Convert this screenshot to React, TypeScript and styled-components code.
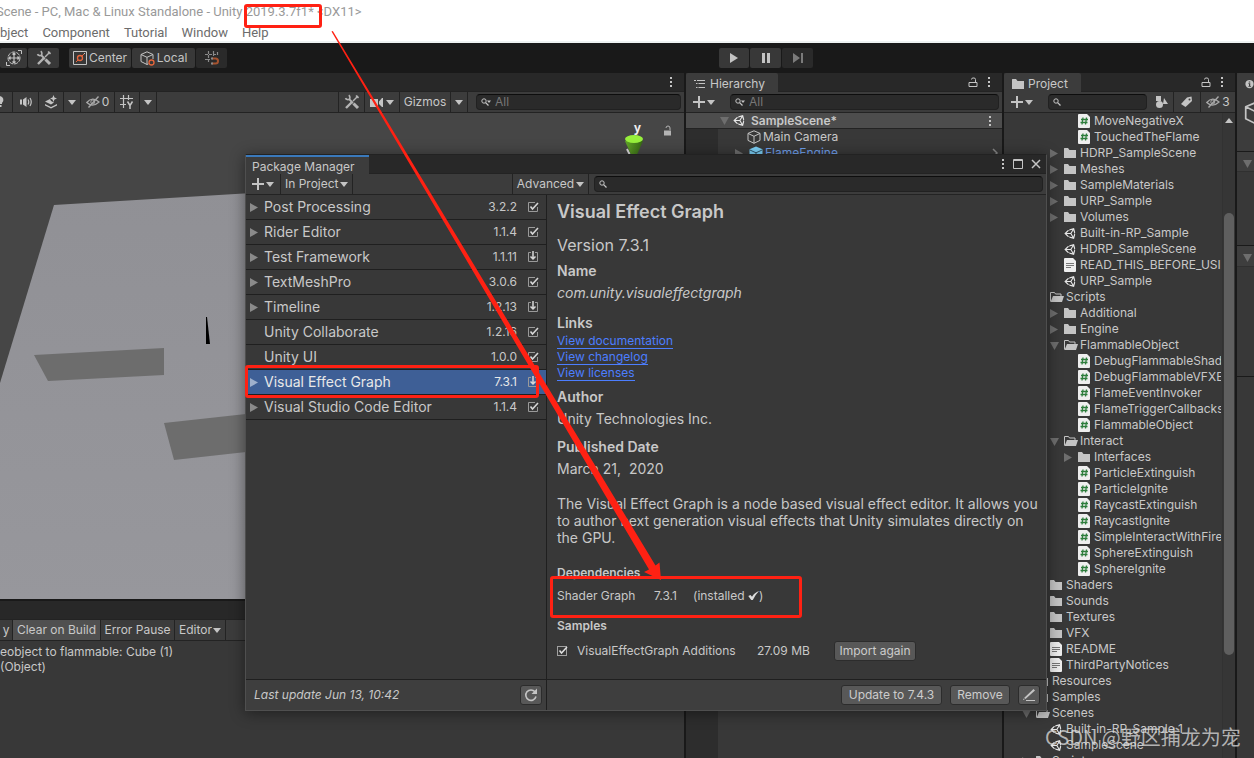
import React from "react";
import styled, { createGlobalStyle, css } from "styled-components";
import { FaUnity } from "react-icons/fa";

const c = {
  frame: "#191919",
  strip: "#282828",
  bar: "#3c3c3c",
  panel: "#383838",
  line: "#232323",
  field: "#2a2a2a",
  text: "#c8c8c8",
  icon: "#c4c4c4",
  dim: "#7b7b7b",
  red: "#ff2113",
};

const GlobalStyle = createGlobalStyle`
  * { box-sizing: border-box; }
  body { margin: 0; background: ${c.frame}; }
  button, input, select { font: inherit; color: inherit; }
  ul { list-style: none; margin: 0; padding: 0; }
`;

const Page = styled.div`
  position: relative;
  display: flex;
  flex-direction: column;
  height: 100vh;
  overflow: hidden;
  color: ${c.text};
  font: 12px/16px Inter, "Liberation Sans", sans-serif;
  white-space: nowrap;
`;

/* ---------- window chrome ---------- */

const WindowHead = styled.header`
  background: #fff;
  border-bottom: 2px solid #eef2f2;
  font-family: Roboto, "Noto Sans", sans-serif;
  font-size: 13px;
`;
const WindowTitle = styled.div`
  height: 24px;
  margin-left: -4px;
  line-height: 24px;
  color: #999;
`;
const MenuBar = styled.nav`
  display: flex;
  gap: 14px;
  height: 17px;
`;
const MenuItem = styled.button`
  padding: 0;
  border: 0;
  background: none;
  line-height: 17px;
  color: #6c6c6c;
`;

const MainToolbar = styled.div`
  display: flex;
  align-items: center;
  flex: none;
  height: 30px;
  background: ${c.frame};
`;
const ToolGroup = styled.div`
  display: flex;
  gap: 1px;
  margin-right: 10px;
`;
const ToolButton = styled.button<{ $w: number; $off?: boolean }>`
  display: flex;
  align-items: center;
  justify-content: center;
  gap: 2px;
  width: ${(p) => p.$w}px;
  height: 20px;
  padding: 0;
  border: 0;
  border-radius: 2px;
  background: ${(p) => (p.$off ? "#2a2a2a" : "#383838")};
  color: ${(p) => (p.$off ? c.dim : c.icon)};
`;
const PlaySpacer = styled.div`
  flex: 0 1 482px;
`;

/* ---------- docks ---------- */

const Docks = styled.main`
  display: flex;
  gap: 2px;
  flex: 1;
  min-height: 0;
  background: ${c.frame};
`;
const Dock = styled.section<{ $w?: number }>`
  display: flex;
  flex-direction: column;
  ${(p) => (p.$w ? css`flex: none; width: ${p.$w}px;` : css`flex: 1;`)}
  min-width: 0;
  min-height: 0;
  background: ${c.panel};
`;
const LeftColumn = styled.div`
  display: flex;
  flex-direction: column;
  gap: 2px;
  flex: 1;
  min-width: 0;
`;
const ConsoleDock = styled(Dock)`
  flex: none;
  height: 157px;
`;
const TabStrip = styled.div`
  display: flex;
  align-items: center;
  justify-content: flex-end;
  gap: 10px;
  flex: none;
  height: 19px;
  padding-right: 11px;
  border-bottom: 1px solid ${c.line};
  background: ${c.strip};
`;
const Tab = styled.div<{ $w: number }>`
  display: flex;
  align-items: center;
  gap: 4px;
  width: ${(p) => p.$w}px;
  height: 19px;
  margin: 0 auto -1px 0;
  padding: 2px 0 0 8px;
  border-radius: 2px 2px 0 0;
  background: ${c.bar};
`;
const Bar = styled.div`
  display: flex;
  align-items: center;
  flex: none;
  height: 21px;
  border-bottom: 1px solid ${c.line};
  background: ${c.bar};
`;
const BarButton = styled.button<{ $w: number; $on?: boolean; $open?: boolean }>`
  display: flex;
  align-items: center;
  justify-content: center;
  gap: 2px;
  flex: none;
  width: ${(p) => p.$w}px;
  height: 20px;
  padding: 0;
  border: 0;
  ${(p) => !p.$open && css`border-right: 1px solid ${c.line};`}
  background: ${(p) => (p.$on ? "#505050" : "transparent")};
  overflow: hidden;
`;
const Fill = styled.div`
  flex: 1;
  align-self: stretch;
  border-right: 1px solid ${c.line};
`;
const SearchField = styled.label<{ $w?: number; $lead?: number }>`
  display: flex;
  align-items: center;
  gap: 4px;
  ${(p) => (p.$w ? css`flex: none; width: ${p.$w}px;` : css`flex: 1;`)}
  min-width: 0;
  height: 16px;
  margin: 0 3px 0 ${(p) => p.$lead ?? 8}px;
  padding-left: 4px;
  border: 1px solid #212121;
  border-top-color: #0d0d0d;
  border-radius: 4px;
  background: ${c.field};
`;
const SearchInput = styled.input`
  flex: 1;
  min-width: 0;
  height: 14px;
  padding: 0;
  border: 0;
  outline: 0;
  background: none;
  line-height: 14px;
  &::placeholder { color: #777; opacity: 1; }
`;
const IconButton = styled.button`
  display: flex;
  align-items: center;
  padding: 0;
  border: 0;
  background: none;
`;

/* ---------- scene and console ---------- */

const SceneView = styled.div`
  flex: 1;
  min-height: 0;
  overflow: hidden;
  background: #464646;
  svg { display: block; }
`;
const ConsoleLog = styled.div`
  padding-top: 3px;
  line-height: 15px;
`;

/* ---------- trees ---------- */

const HierarchyBody = styled.ul`
  flex: 1;
  min-height: 0;
  background: linear-gradient(90deg, #2d2d2d 32px, ${c.panel} 32px);
`;
const TreeRow = styled.li<{ $pad: number; $head?: boolean; $prefab?: boolean }>`
  display: flex;
  align-items: center;
  gap: 2px;
  height: 16px;
  padding-left: ${(p) => p.$pad}px;
  color: ${(p) => (p.$prefab ? "#6f9fea" : c.text)};
  svg { flex: none; }
  ${(p) => p.$head && css`
    gap: 4px;
    padding-right: 10px;
    border-bottom: 1px solid ${c.line};
    background: #4d4d4d;
    font-weight: 600;
    > :last-child { margin-left: auto; }
  `}
  ${(p) => p.$prefab && css`
    padding-right: 3px;
    > :last-child { margin-left: auto; }
  `}
`;
const Twisty = styled.span`
  display: flex;
  flex: none;
  width: 12px;
`;
const SceneSlot = styled.span`
  display: flex;
  flex: none;
  width: 14px;
`;
const ProjectBody = styled.div`
  display: flex;
  flex: 1;
  min-height: 0;
`;
const ProjectTree = styled.ul`
  flex: 1;
  min-width: 0;
  overflow: hidden;
`;
const ScrollTrack = styled.div`
  display: flex;
  flex-direction: column;
  align-items: center;
  flex: none;
  width: 13px;
  margin-left: 1px;
  padding-top: 5px;
  border-left: 1px solid #323232;
  background: #363636;
`;
const ScrollThumb = styled.div`
  width: 10px;
  height: 442px;
  margin-top: 90px;
  border-radius: 5px;
  background: #5f5f5f;
`;
const InspectorBlock = styled.div<{ $h: number; $head?: boolean }>`
  flex: none;
  height: ${(p) => p.$h}px;
  padding: ${(p) => (p.$head ? "7px 0 0 6px" : 0)};
  border-bottom: 1px solid ${(p) => (p.$head ? "#303030" : "#1a1a1a")};
  background: ${(p) => (p.$head ? "#3e3e3e" : c.panel)};
  overflow: hidden;
  svg { display: block; }
`;
const InspectorTop = styled.div`
  flex: none;
  height: 61px;
  padding: 10px 0 0 7px;
  border-bottom: 1px solid #1a1a1a;
  background: ${c.bar};
  overflow: hidden;
`;

/* ---------- package manager window ---------- */

const PackageWindow = styled.section`
  position: absolute;
  left: 245px;
  top: 154px;
  display: flex;
  flex-direction: column;
  width: 802px;
  height: 557px;
  border: 1px solid #4f4f4f;
  border-top-color: #222;
  background: ${c.panel};
  box-shadow: 0 2px 14px rgba(0, 0, 0, 0.45);
`;
const WindowStrip = styled(TabStrip)`
  gap: 8px;
  padding-right: 5px;
`;
const WindowTab = styled.div`
  width: 123px;
  height: 19px;
  margin: 0 auto -1px 0;
  padding-left: 6px;
  border-top: 2px solid #3a79bb;
  background: ${c.bar};
  line-height: 20px;
`;
const SelectWrap = styled.label<{ $w: number }>`
  display: flex;
  align-items: center;
  justify-content: center;
  gap: 1px;
  flex: none;
  width: ${(p) => p.$w}px;
  height: 20px;
  border-right: 1px solid ${c.line};
`;
const Select = styled.select`
  appearance: none;
  padding: 0;
  border: 0;
  outline: 0;
  background: transparent;
`;
const WindowBody = styled.div`
  display: flex;
  flex: 1;
  min-height: 0;
`;
const ListPane = styled.div`
  display: flex;
  flex-direction: column;
  flex: none;
  width: 301px;
  border-right: 1px solid #1f1f1f;
`;
const PackageList = styled.ul`
  flex: 1;
`;
const PackageRow = styled.button<{ $on?: boolean }>`
  display: flex;
  align-items: center;
  width: 100%;
  height: 25px;
  padding: 0 7px 0 4px;
  border: 0;
  border-bottom: 1px solid #1f1f1f;
  background: ${(p) => (p.$on ? "#3e5f96" : "transparent")};
  color: ${(p) => (p.$on ? "#e8e8e8" : c.text)};
  text-align: left;
`;
const PackageArrow = styled.span`
  display: flex;
  width: 14px;
`;
const PackageName = styled.span`
  flex: 1;
  font-size: 14px;
`;
const PackageVersion = styled.span`
  padding-right: 10px;
`;
const Footer = styled.div<{ $end: number }>`
  display: flex;
  align-items: center;
  justify-content: flex-end;
  gap: 8px;
  flex: none;
  height: 31px;
  padding: 0 ${(p) => p.$end}px 0 8px;
  border-top: 1px solid #1f1f1f;
  background: #3e3e3e;
`;
const UpdateNote = styled.em`
  margin-right: auto;
`;
const PushButton = styled.button<{ $w: number }>`
  display: flex;
  align-items: center;
  justify-content: center;
  flex: none;
  width: ${(p) => p.$w}px;
  height: 20px;
  padding: 0;
  border: 1px solid #2c2c2c;
  border-radius: 3px;
  background: #585858;
  color: #ccc;
  svg { flex: none; }
`;
const DetailPane = styled.div`
  display: flex;
  flex-direction: column;
  flex: 1;
  min-width: 0;
`;
const Details = styled.div`
  flex: 1;
  min-height: 0;
  padding: 5px 5px 0 10px;
  font-size: 14px;
  line-height: 18px;
`;
const PackageTitle = styled.h1`
  margin: 0 0 11px;
  font-size: 18px;
  line-height: 24px;
  font-weight: 600;
`;
const VersionLine = styled.div`
  margin-bottom: 7px;
  font-size: 16px;
  line-height: 20px;
`;
const Field = styled.div<{ $tight?: boolean; $after: number }>`
  display: flex;
  flex-direction: column;
  align-items: flex-start;
  gap: ${(p) => (p.$tight ? 1 : 4)}px;
  margin-bottom: ${(p) => p.$after}px;
`;
const FieldName = styled.h2`
  margin: 0;
  font-size: 14px;
  line-height: 18px;
  font-weight: 600;
`;
const LinkList = styled.ul`
  font-size: 12px;
  line-height: 16px;
`;
const DocLink = styled.a`
  display: block;
  width: fit-content;
  height: 16px;
  line-height: 15px;
  border-bottom: 1px solid #4c7eff;
  color: #4c7eff;
  text-decoration: none;
`;
const Description = styled.p`
  margin: 0 0 19px;
  line-height: 17px;
  white-space: normal;
`;
const SmallHeading = styled.h3`
  margin: 0;
  font-size: 12px;
  line-height: 16px;
  font-weight: 600;
`;
const SmallRow = styled.div<{ $after: number }>`
  display: flex;
  align-items: center;
  margin: 7px 0 ${(p) => p.$after}px;
  font-size: 12px;
  line-height: 16px;
`;
const Cell = styled.span<{ $w: number }>`
  width: ${(p) => p.$w}px;
`;
const CheckLabel = styled.label`
  display: flex;
  align-items: center;
  gap: 10px;
  width: 200px;
`;
const CheckInput = styled.input`
  appearance: none;
  width: 10px;
  height: 10px;
  margin: 0;
  border: 1px solid #a0a0a0;
`;
const CheckBox = styled.span`
  display: grid;
  width: 10px;
  > * { grid-area: 1 / 1; }
  svg { overflow: visible; pointer-events: none; }
`;

/* ---------- annotations ---------- */

const Mark = styled.div<{ $x: number; $y: number; $w: number; $h: number }>`
  position: absolute;
  left: ${(p) => p.$x}px;
  top: ${(p) => p.$y}px;
  width: ${(p) => p.$w}px;
  height: ${(p) => p.$h}px;
  border: 3px solid ${c.red};
  border-radius: 3px;
  pointer-events: none;
`;
const ArrowLayer = styled.svg`
  position: absolute;
  left: 330px;
  top: 30px;
  pointer-events: none;
`;
const Watermark = styled.div`
  position: absolute;
  left: 1045px;
  top: 723px;
  font: 20px/28px "Noto Sans CJK SC", sans-serif;
  color: rgba(220, 220, 220, 0.75);
  pointer-events: none;
`;

/* ---------- icons ---------- */

const Down = () => (
  <svg width="8" height="5" viewBox="0 0 8 5"><path d="M0 0h8L4 5z" fill={c.icon} /></svg>
);
const Arrow = ({ open, color = "#6e6e6e" }: { open?: boolean; color?: string }) => (
  <svg width="9" height="9" viewBox="0 0 9 9"><path d={open ? "M0 1h9L4.500 9z" : "M0 0v9L8 4.500z"} fill={color} /></svg>
);
const Dots = () => (
  <svg width="3" height="12" viewBox="0 0 3 12" fill={c.icon}><path d="M0 1h2v2H0zM0 5h2v2H0zM0 9h2v2H0z" /></svg>
);
const Plus = () => (
  <svg width="12" height="12" viewBox="0 0 12 12"><path d="M6 0v12M0 6h12" stroke={c.icon} strokeWidth="2" /></svg>
);
const Lock = () => (
  <svg width="10" height="11" viewBox="0 0 10 11" fill="none" stroke={c.icon}>
    <path d="M1 5.500h8v4H1zM7.500 5V2.500Q7.500 1 6 1H5Q3.500 1 3.500 2.500" />
  </svg>
);
const Lens = ({ menu }: { menu?: boolean }) => (
  <svg width="10" height="8" viewBox="0 0 10 8" fill="none" stroke={c.icon}>
    <circle cx="3" cy="3" r="2.200" /><path d="M4.600 4.600L7.500 7.500" strokeWidth="1.300" />
    {menu && <path d="M6 2.500h4L8 5z" fill={c.icon} stroke="none" />}
  </svg>
);
const Cube = ({ size = 14, fill = "none", color = c.icon }: { size?: number; fill?: string; color?: string }) => (
  <svg width={size} height={size} viewBox="0 0 14 14" fill={fill} stroke={color} strokeLinejoin="round">
    <path d="M7 .8l6 2.600v7L7 13.300l-6-2.900v-7zM1 3.400l6 2.900 6-2.900M7 6.300v7" />
  </svg>
);
const PrefabCube = () => (
  <svg width="14" height="14" viewBox="0 0 14 14">
    <path d="M7 .5l6.500 2.800v7.400L7 13.700.5 10.700V3.300z" fill="#7cd0f7" />
    <path d="M.5 3.800L7 6.800l6.500-3M7 6.800v7" fill="none" stroke="#30566b" />
  </svg>
);
const Tools = () => (
  <svg width="16" height="16" viewBox="0 0 16 16" fill="none" stroke="#b4b4b4">
    <path d="M2 14l6-6" strokeWidth="2.400" />
    <path d="M9 7l5-5" strokeWidth="1.400" />
    <path d="M5 5l4 4" strokeWidth="1.800" />
    <path d="M9.500 9.500l4.500 4.500" strokeWidth="3" />
    <path d="M1.500 4.200a2.400 2.400 0 0 0 3.800 .8 2.400 2.400 0 0 0-.6-3.700" strokeWidth="1.600" />
    <path d="M12 1.500l2.500 2.500" strokeWidth="1.600" />
  </svg>
);
const Transform = () => (
  <svg width="18" height="18" viewBox="0 0 18 18" fill="none" stroke={c.icon}>
    <circle cx="9" cy="9" r="6" strokeDasharray="4 1" />
    <path d="M9 4v10M4 9h10M7.500 5.500L9 4l1.500 1.500M7.500 12.500L9 14l1.500-1.500M5.500 7.500L4 9l1.500 1.500M12.500 7.500L14 9l-1.500 1.500" strokeWidth="1.200" />
    <path d="M13 1.500h3.500V5M5 16.500H1.500V13" />
  </svg>
);
const Pivot = () => (
  <svg width="14" height="14" viewBox="0 0 14 14" fill="none">
    <path d="M.5 .5h13v13H.5zM3 11l2-2M9 5l3-3" stroke={c.icon} />
    <circle cx="7" cy="7" r="2.500" stroke="#e8663c" strokeWidth="1.300" />
    <path d="M9 5l2-2M3 11l2-2" stroke="#e8663c" />
  </svg>
);
const LocalCube = () => (
  <svg width="15" height="15" viewBox="0 0 15 15" fill="none" stroke={c.icon} strokeLinejoin="round">
    <path d="M8.500 12.800L7 13.500l-6-3V3.500l6-2.700 6 2.700V8M1 3.500l6 2.800 6-2.800M7 6.300v7.200" />
    <circle cx="11.500" cy="11.500" r="2.500" stroke="#e8663c" strokeWidth="1.300" />
  </svg>
);
const GridSnap = () => (
  <svg width="16" height="16" viewBox="0 0 16 16" fill="none" stroke="#8b8b8b">
    <path d="M4.500 1v12M9.500 1v5M1 4.500h13M1 9.500h5M13.500 2v4" strokeWidth="1.200" strokeDasharray="3 1" />
    <path d="M8 8.500h3.500a2.500 2.500 0 0 1 0 5H8" stroke="#a6532f" strokeWidth="2" />
    <path d="M7 8.500h2M7 13.500h2" strokeWidth="2" />
  </svg>
);
const GridY = () => (
  <svg width="16" height="16" viewBox="0 0 16 16" fill="none" stroke={c.icon}>
    <path d="M4.500 1v13M9.500 1v5M1 4.500h13M1 10.500h6" strokeWidth="1.200" />
    <path d="M8.500 7.500l2.500 4 2.500-4M11 11v4" strokeWidth="1.500" />
  </svg>
);
const Play = () => <svg width="10" height="10" viewBox="0 0 10 10"><path d="M1 0v10l8-5z" fill={c.icon} /></svg>;
const Pause = () => <svg width="10" height="10" viewBox="0 0 10 10"><path d="M1 0h3v10H1zM6 0h3v10H6z" fill={c.icon} /></svg>;
const Step = () => <svg width="12" height="10" viewBox="0 0 12 10"><path d="M1 0v10l7-5zM9 0h2v10H9z" fill={c.dim} /></svg>;
const Speaker = () => (
  <svg width="14" height="12" viewBox="0 0 14 12" fill="none" stroke={c.icon}>
    <path d="M1 3.500h2v5H1zM4 3.500l3.500-2.500v10L4 8.500z" fill={c.icon} stroke="none" />
    <path d="M9 3.500q1.500 2.500 0 5M11 2q2.500 4 0 8" strokeWidth="1.200" />
  </svg>
);
const Effects = () => (
  <svg width="14" height="14" viewBox="0 0 14 14" fill={c.icon}>
    <path d="M1 6.500L6 4l1 2 3 1.500L7 9.500zM1 9l6 3 6-3v1.500L7 13.500 1 10.500z" />
    <path d="M9.500 0l1 2.500L13 3.500l-2.500 1-1 2.500-1-2.500-2.500-1 2.500-1z" />
  </svg>
);
const Bulb = () => <svg width="12" height="12" viewBox="0 0 12 12"><path d="M0 0a4 4 0 0 1 2 7v1H0zM0 9h1.500v2H0z" fill={c.icon} /></svg>;
const EyeOff = () => (
  <svg width="14" height="12" viewBox="0 0 14 12" fill="none" stroke="#a8a8a8">
    <path d="M.8 6.500Q6.500 0 13 6Q6.500 12 .8 6.500z" strokeWidth="1.300" /><circle cx="6.800" cy="6" r="2" /><path d="M2.500 11.500L12.500 .5" strokeWidth="1.400" />
  </svg>
);
const CameraIcon = () => (
  <svg width="14" height="9" viewBox="0 0 14 9" fill={c.icon}><path d="M0 1h8v8H0zM9 3.500L12 0v9L9 6z" /><path d="M12 0h1v9h-1z" /></svg>
);
const ListIcon = () => (
  <svg width="12" height="10" viewBox="0 0 12 10" stroke={c.icon}>
    <path d="M0 1.500h2M3 1.500h8M2 4.500h1.500M4.500 4.500H11M2 8.500h1.500M4.500 8.500H11" />
  </svg>
);
const Folder = ({ open }: { open?: boolean }) =>
  open ? (
    <svg width="14" height="12" viewBox="0 0 14 12">
      <path d="M.5 10.500V1.500h4l1 1.500h5.500v2" fill="none" stroke={c.icon} /><path d="M3 5h11l-2 6H.5z" fill={c.icon} />
    </svg>
  ) : (
    <svg width="14" height="12" viewBox="0 0 14 12"><path d="M0 1.500Q0 1 .5 1H4l1.500 2H12v8H0z" fill={c.icon} /></svg>
  );
const TabFolder = () => (
  <svg width="12" height="12" viewBox="0 0 12 12"><path d="M0 1.500Q0 1 .5 1H4l1.500 2H12v8H0z" fill={c.icon} /></svg>
);
const Script = () => (
  <svg width="14" height="14" viewBox="0 0 14 14">
    <path d="M0 1Q0 0 1 0h8l3 3v10q0 1-1 1H1q-1 0-1-1z" fill="#eee" />
    <path d="M5 3.500L4 10.500M8.500 3.500l-1 7M3 5.500h7M2.500 8.500h7" stroke="#2d7d3c" strokeWidth="1.300" />
  </svg>
);
const Doc = () => (
  <svg width="14" height="14" viewBox="0 0 14 14">
    <path d="M0 1Q0 0 1 0h8l3 3v10q0 1-1 1H1q-1 0-1-1z" fill="#eee" />
    <path d="M2 5.500h8M2 7.500h8M2 9.500h5" stroke="#777" />
  </svg>
);
const Scene = () => <SceneSlot><FaUnity size={13} color="#e6e6e6" /></SceneSlot>;
const Checked = () => (
  <svg width="12" height="12" viewBox="0 0 12 12" fill="none">
    <path d="M10.500 6v4.500H1.500V1.500H8" stroke="#9a9a9a" /><path d="M3.500 5.500l2 2.500L11 2" stroke="#d6d6d6" strokeWidth="1.600" />
  </svg>
);
const Download = () => (
  <svg width="12" height="12" viewBox="0 0 12 12" fill="none">
    <path d="M4 1.500H1.500v9h9v-9H8" stroke="#9a9a9a" /><path d="M6 0v7M3.500 5.500L6 8l2.500-2.500" stroke="#d6d6d6" strokeWidth="1.500" />
  </svg>
);
const Tick = () => (
  <svg width="10" height="10" viewBox="0 0 10 10"><path d="M2.500 4.500l2 2.500L10 1" fill="none" stroke="#e0e0e0" strokeWidth="1.500" /></svg>
);
const Heavy = () => (
  <svg width="11" height="9" viewBox="0 0 11 9"><path d="M.3 5L2.500 4l1.500 1.800Q6.500 1.500 11 0 7.500 3.500 4.800 9H3.200z" fill="#dcdcdc" /></svg>
);
const Refresh = () => (
  <svg width="14" height="14" viewBox="0 0 14 14" fill="none" stroke={c.icon} strokeWidth="1.600">
    <path d="M11 3.800a5.200 5.200 0 1 0 1 4.800" /><path d="M13 .5v5.500H7.500z" fill={c.icon} stroke="none" />
  </svg>
);
const Pencil = () => (
  <svg width="12" height="12" viewBox="0 0 12 12"><path d="M1 9l1.500 1L12 1.500 10.500 0zM.5 9.500L0 11l1.700-.5z" fill={c.icon} /><path d="M3 11.500h9" stroke={c.icon} /></svg>
);
const Shapes = () => (
  <svg width="13" height="12" viewBox="0 0 13 12" fill={c.icon}><path d="M1 0h5v5H1zM9 2l4 6H8z" /><circle cx="4.500" cy="8.500" r="3.500" /></svg>
);
const Tag = () => (
  <svg width="12" height="12" viewBox="0 0 12 12"><path d="M0 8L6 1.500 10.500 .5 11 5 4.500 11z" fill={c.icon} /><circle cx="8.500" cy="3.500" r="1" fill={c.bar} /></svg>
);
const Info = () => (
  <svg width="12" height="12" viewBox="0 0 12 12"><circle cx="6" cy="6" r="5.500" fill={c.icon} /><path d="M5 2.500h2v1.500H5zM4.500 5H7v3.500h1v1H4.500v-1h.8V6h-.8z" fill={c.bar} /></svg>
);

/* ---------- data ---------- */

type Kind = "script" | "doc" | "scene" | "folder" | "open";
const kinds: Record<Kind, React.ReactNode> = {
  script: <Script />,
  doc: <Doc />,
  scene: <Scene />,
  folder: <Folder />,
  open: <Folder open />,
};
const tree: [number, Kind, string, ("right" | "down")?][] = [
  [3, "script", "MoveNegativeX"],
  [3, "script", "TouchedTheFlame"],
  [2, "folder", "HDRP_SampleScene", "right"],
  [2, "folder", "Meshes", "right"],
  [2, "folder", "SampleMaterials", "right"],
  [2, "folder", "URP_Sample", "right"],
  [2, "folder", "Volumes", "right"],
  [2, "scene", "Built-in-RP_Sample"],
  [2, "scene", "HDRP_SampleScene"],
  [2, "doc", "READ_THIS_BEFORE_USING"],
  [2, "scene", "URP_Sample"],
  [1, "open", "Scripts", "down"],
  [2, "folder", "Additional", "right"],
  [2, "folder", "Engine", "right"],
  [2, "open", "FlammableObject", "down"],
  [3, "script", "DebugFlammableShader"],
  [3, "script", "DebugFlammableVFXBox"],
  [3, "script", "FlameEventInvoker"],
  [3, "script", "FlameTriggerCallbacks"],
  [3, "script", "FlammableObject"],
  [2, "open", "Interact", "down"],
  [3, "folder", "Interfaces", "right"],
  [3, "script", "ParticleExtinguish"],
  [3, "script", "ParticleIgnite"],
  [3, "script", "RaycastExtinguish"],
  [3, "script", "RaycastIgnite"],
  [3, "script", "SimpleInteractWithFire"],
  [3, "script", "SphereExtinguish"],
  [3, "script", "SphereIgnite"],
  [1, "folder", "Shaders", "right"],
  [1, "folder", "Sounds", "right"],
  [1, "folder", "Textures", "right"],
  [1, "folder", "VFX", "right"],
  [1, "doc", "README"],
  [1, "doc", "ThirdPartyNotices"],
  [0, "folder", "Resources", "right"],
  [0, "folder", "Samples", "right"],
  [0, "open", "Scenes", "down"],
  [1, "scene", "Built-in-RP_Sample 1"],
  [1, "scene", "SampleScene"],
  [0, "folder", "Scripts", "right"],
];

const packages = [
  { name: "Post Processing", version: "3.2.2", many: true },
  { name: "Rider Editor", version: "1.1.4", many: true },
  { name: "Test Framework", version: "1.1.11", many: true, update: true },
  { name: "TextMeshPro", version: "3.0.6", many: true },
  { name: "Timeline", version: "1.2.13", many: true, update: true },
  { name: "Unity Collaborate", version: "1.2.16" },
  { name: "Unity UI", version: "1.0.0" },
  { name: "Visual Effect Graph", version: "7.3.1", many: true, update: true, on: true },
  { name: "Visual Studio Code Editor", version: "1.1.4", many: true },
];

type SearchProps = { label: string; hint?: string; menu?: boolean; width?: number; lead?: number };
const Search = ({ label, hint, menu, width, lead }: SearchProps) => (
  <SearchField $w={width} $lead={lead}>
    <Lens menu={menu} />
    <SearchInput type="text" aria-label={label} placeholder={hint} />
  </SearchField>
);

/* ---------- parts ---------- */

const TopBar = () => (
  <MainToolbar>
    <ToolGroup>
      <ToolButton $w={27} aria-label="Transform"><Transform /></ToolButton>
      <ToolButton $w={31} aria-label="Custom tools"><Tools /></ToolButton>
    </ToolGroup>
    <ToolGroup>
      <ToolButton $w={62}><Pivot />Center</ToolButton>
      <ToolButton $w={63}><LocalCube />Local</ToolButton>
      <ToolButton $w={31} $off aria-label="Grid snapping"><GridSnap /></ToolButton>
    </ToolGroup>
    <PlaySpacer />
    <ToolGroup>
      <ToolButton $w={30} aria-label="Play"><Play /></ToolButton>
      <ToolButton $w={31} aria-label="Pause"><Pause /></ToolButton>
      <ToolButton $w={31} $off aria-label="Step"><Step /></ToolButton>
    </ToolGroup>
  </MainToolbar>
);

const SceneDock = () => (
  <Dock>
    <TabStrip>
      <IconButton aria-label="Scene menu"><Dots /></IconButton>
    </TabStrip>
    <Bar>
      <BarButton $w={13} aria-label="Lighting"><Bulb /></BarButton>
      <BarButton $w={26} aria-label="Audio"><Speaker /></BarButton>
      <BarButton $w={25} aria-label="Effects"><Effects /></BarButton>
      <BarButton $w={17} aria-label="Effects menu"><Down /></BarButton>
      <BarButton $w={34} aria-label="Hidden objects"><EyeOff />0</BarButton>
      <BarButton $w={25} aria-label="Grid"><GridY /></BarButton>
      <BarButton $w={17} aria-label="Grid menu"><Down /></BarButton>
      <Fill />
      <BarButton $w={26} aria-label="Component tools"><Tools /></BarButton>
      <BarButton $w={35} aria-label="Camera"><CameraIcon /><Down /></BarButton>
      <BarButton $w={51}>Gizmos</BarButton>
      <BarButton $w={17} aria-label="Gizmos menu"><Down /></BarButton>
      <Search label="Search scene" hint="All" menu width={205} />
    </Bar>
    <SceneView>
      <svg width="684" height="486" viewBox="0 0 684 486">
        <defs>
          <linearGradient id="floor" x1="0" y1="0" x2="0" y2="1">
            <stop offset="0" stopColor="#909095" /><stop offset="1" stopColor="#97979c" />
          </linearGradient>
          <linearGradient id="cone"><stop offset="0" stopColor="#63a928" /><stop offset="1" stopColor="#356514" /></linearGradient>
        </defs>
        <path d="M54 92L684 54V486H0V270z" fill="url(#floor)" />
        <path d="M34 242l130-7v27l-116 6z" fill="#6d6d6d" />
        <path d="M164 310l82-9v38l-72 8z" fill="#6d6d6d" />
        <path d="M206 204l1 0 3 27h-4z" fill="#000" />
        <path d="M627 36l5 10" stroke="#ddd" strokeWidth="2" />
        <path d="M625 28h18l-8 18h-2z" fill="url(#cone)" />
        <ellipse cx="634" cy="26" rx="9" ry="4" fill="#97f03c" />
        <text x="634" y="19" fill="#eee" fontSize="12" fontWeight="700" fontFamily="Noto Sans">y</text>
        <path d="M664 17.500h7v5h-7z" fill="#b4b4b4" /><path d="M670 17v-2q0-2-2-2t-2 2" fill="none" stroke="#b4b4b4" />
      </svg>
    </SceneView>
  </Dock>
);

const ConsolePanel = () => (
  <ConsoleDock>
    <TabStrip />
    <Bar>
      <BarButton $w={13}>y</BarButton>
      <BarButton $w={88} $on>Clear on Build</BarButton>
      <BarButton $w={74}>Error Pause</BarButton>
      <SelectWrap $w={51}>
        <Select aria-label="Log target"><option>Editor</option></Select>
        <Down />
      </SelectWrap>
    </Bar>
    <ConsoleLog>
      <div>eobject to flammable: Cube (1)</div>
      <div>(Object)</div>
    </ConsoleLog>
  </ConsoleDock>
);

const HierarchyDock = () => (
  <Dock $w={316}>
    <TabStrip>
      <Tab $w={92}><ListIcon />Hierarchy</Tab>
      <IconButton aria-label="Lock hierarchy"><Lock /></IconButton>
      <IconButton aria-label="Hierarchy menu"><Dots /></IconButton>
    </TabStrip>
    <Bar>
      <BarButton $w={36} $open aria-label="Create"><Plus /><Down /></BarButton>
      <Search label="Search hierarchy" hint="All" menu />
    </Bar>
    <HierarchyBody>
      <TreeRow $pad={34} $head>
        <Arrow open />
        <Scene />
        <span>SampleScene*</span>
        <Dots />
      </TreeRow>
      <TreeRow $pad={61}><Cube />Main Camera</TreeRow>
      <TreeRow $pad={49} $prefab>
        <Twisty><Arrow /></Twisty>
        <PrefabCube />
        FlameEngine
        <svg width="8" height="10" viewBox="0 0 8 10"><path d="M2 1l4 4-4 4" fill="none" stroke="#888" strokeWidth="1.500" /></svg>
      </TreeRow>
    </HierarchyBody>
  </Dock>
);

const ProjectDock = () => (
  <Dock $w={231}>
    <TabStrip>
      <Tab $w={77}><TabFolder />Project</Tab>
      <IconButton aria-label="Lock project"><Lock /></IconButton>
      <IconButton aria-label="Project menu"><Dots /></IconButton>
    </TabStrip>
    <Bar>
      <BarButton $w={36} $open aria-label="Create asset"><Plus /><Down /></BarButton>
      <Search label="Search project" />
      <BarButton $w={24} aria-label="Filter by type"><Shapes /></BarButton>
      <BarButton $w={27} aria-label="Filter by label"><Tag /></BarButton>
      <BarButton $w={34} $open aria-label="Hidden packages"><EyeOff />3</BarButton>
    </Bar>
    <ProjectBody>
      <ProjectTree>
        {tree.map(([depth, kind, name, dir], i) => (
          <TreeRow key={i} $pad={18 + depth * 14}>
            <Twisty>{dir && <Arrow open={dir === "down"} />}</Twisty>
            {kinds[kind]}
            <span>{name}</span>
          </TreeRow>
        ))}
      </ProjectTree>
      <ScrollTrack>
        <svg width="8" height="5" viewBox="0 0 8 5"><path d="M4 0l4 5H0z" fill={c.icon} /></svg>
        <ScrollThumb />
      </ScrollTrack>
    </ProjectBody>
  </Dock>
);

const InspectorDock = () => (
  <Dock $w={17}>
    <Tab $w={17}><Info /></Tab>
    <InspectorTop><Cube size={24} /></InspectorTop>
    <InspectorBlock $h={20} $head><Arrow open /></InspectorBlock>
    <InspectorBlock $h={74} />
    <InspectorBlock $h={21} $head><Arrow open /></InspectorBlock>
    <InspectorBlock $h={110} />
  </Dock>
);

const PackageDetails = () => (
  <Details>
    <PackageTitle>Visual Effect Graph</PackageTitle>
    <VersionLine>Version 7.3.1</VersionLine>
    <Field $after={12}>
      <FieldName>Name</FieldName>
      <em>com.unity.visualeffectgraph</em>
    </Field>
    <Field $after={7} $tight>
      <FieldName>Links</FieldName>
      <LinkList>
        {["View documentation", "View changelog", "View licenses"].map((t) => (
          <li key={t}><DocLink href="#">{t}</DocLink></li>
        ))}
      </LinkList>
    </Field>
    <Field $after={10}>
      <FieldName>Author</FieldName>
      <span>Unity Technologies Inc.</span>
    </Field>
    <Field $after={17}>
      <FieldName>Published Date</FieldName>
      <span>March 21, &nbsp;2020</span>
    </Field>
    <Description>
      The Visual Effect Graph is a node based visual effect editor. It allows you to author next
      generation visual effects that Unity simulates directly on the GPU.
    </Description>
    <SmallHeading>Dependencies</SmallHeading>
    <SmallRow $after={14}>
      <Cell $w={97}>Shader Graph</Cell>
      <Cell $w={39}>7.3.1</Cell>
      <span>(installed <Heavy />)</span>
    </SmallRow>
    <SmallHeading>Samples</SmallHeading>
    <SmallRow $after={0}>
      <CheckLabel>
        <CheckBox><CheckInput type="checkbox" defaultChecked /><Tick /></CheckBox>
        VisualEffectGraph Additions
      </CheckLabel>
      <Cell $w={77}>27.09 MB</Cell>
      <PushButton $w={82}>Import again</PushButton>
    </SmallRow>
  </Details>
);

const PackageManager = () => (
  <PackageWindow>
    <WindowStrip>
      <WindowTab>Package Manager</WindowTab>
      <IconButton aria-label="Window menu"><Dots /></IconButton>
      <IconButton aria-label="Maximize">
        <svg width="10" height="10" viewBox="0 0 10 10"><path d="M.5 .5h9v9h-9zM0 1.500h10" fill="none" stroke={c.icon} /></svg>
      </IconButton>
      <IconButton aria-label="Close">
        <svg width="10" height="10" viewBox="0 0 10 10"><path d="M1 1l8 8M9 1L1 9" stroke={c.icon} strokeWidth="1.500" /></svg>
      </IconButton>
    </WindowStrip>
    <Bar>
      <BarButton $w={35} aria-label="Add package"><Plus /><Down /></BarButton>
      <SelectWrap $w={72}>
        <Select aria-label="Package scope"><option>In Project</option></Select>
        <Down />
      </SelectWrap>
      <Fill />
      <BarButton $w={76}>Advanced<Down /></BarButton>
      <Search label="Search packages" width={449} lead={5} />
    </Bar>
    <WindowBody>
      <ListPane>
        <PackageList>
          {packages.map((p) => (
            <li key={p.name}>
              <PackageRow $on={p.on}>
                <PackageArrow>{p.many && <Arrow color={p.on ? "#9fb0cc" : "#8a8a8a"} />}</PackageArrow>
                <PackageName>{p.name}</PackageName>
                <PackageVersion>{p.version}</PackageVersion>
                {p.update ? <Download /> : <Checked />}
              </PackageRow>
            </li>
          ))}
        </PackageList>
        <Footer $end={4}>
          <UpdateNote>Last update Jun 13, 10:42</UpdateNote>
          <PushButton $w={22} aria-label="Refresh"><Refresh /></PushButton>
        </Footer>
      </ListPane>
      <DetailPane>
        <PackageDetails />
        <Footer $end={6}>
          <PushButton $w={101}>Update to 7.4.3</PushButton>
          <PushButton $w={60}>Remove</PushButton>
          <PushButton $w={22} aria-label="Edit manifest"><Pencil /></PushButton>
        </Footer>
      </DetailPane>
    </WindowBody>
  </PackageWindow>
);

export default function App() {
  return (
    <Page>
      <GlobalStyle />
      <WindowHead>
        <WindowTitle>Scene - PC, Mac &amp; Linux Standalone - Unity 2019.3.7f1* &lt;DX11&gt;</WindowTitle>
        <MenuBar>
          {["bject", "Component", "Tutorial", "Window", "Help"].map((m) => (
            <MenuItem key={m}>{m}</MenuItem>
          ))}
        </MenuBar>
      </WindowHead>
      <TopBar />
      <Docks>
        <LeftColumn>
          <SceneDock />
          <ConsolePanel />
        </LeftColumn>
        <HierarchyDock />
        <ProjectDock />
        <InspectorDock />
      </Docks>
      <PackageManager />
      <Mark $x={244} $y={4} $w={78} $h={24} />
      <Mark $x={245} $y={365} $w={294} $h={33} />
      <Mark $x={550} $y={576} $w={252} $h={42} />
      <ArrowLayer width="334" height="552" viewBox="330 30 334 552">
        <path d="M331.500 31.500L649 569.500 644 572 661 580 659.500 562.500 655.500 565.500 332.800 31z" fill={c.red} />
      </ArrowLayer>
      <Watermark>CSDN @野区捕龙为宠</Watermark>
    </Page>
  );
}
